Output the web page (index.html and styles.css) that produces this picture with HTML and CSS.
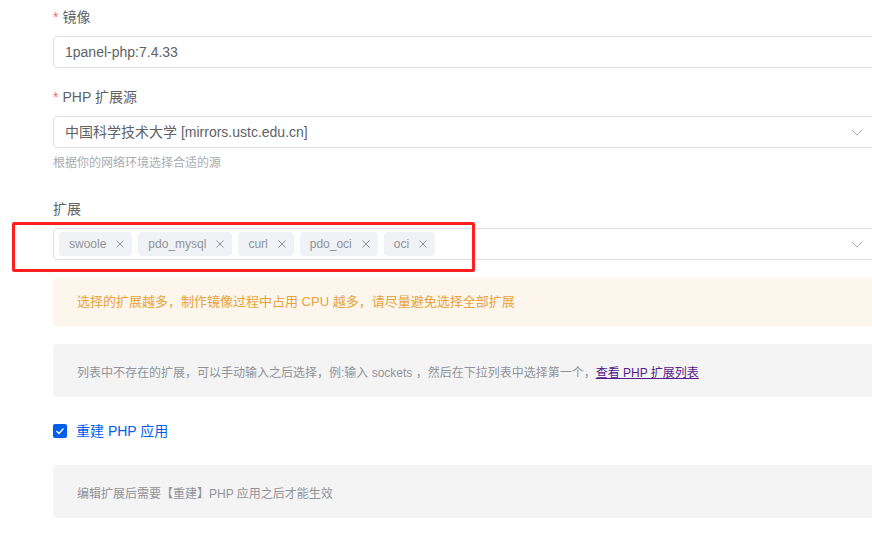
FILE: index.html
```html
<!DOCTYPE html>
<html lang="zh-CN">
<head>
<meta charset="utf-8">
<title>PHP 扩展</title>
<link rel="stylesheet" href="styles.css">
</head>
<body>
<div class="page">
  <div class="form-item">
    <div class="label"><span class="req">*</span>镜像</div>
    <div class="input">1panel-php:7.4.33</div>
  </div>

  <div class="form-item form-item--help">
    <div class="label"><span class="req">*</span>PHP 扩展源</div>
    <div class="input select">
      <span>中国科学技术大学 [mirrors.ustc.edu.cn]</span>
      <svg class="chevron" width="12" height="7" viewBox="0 0 12 7"><polyline points="1,1 6,6 11,1" fill="none" stroke="#a8abb2" stroke-width="1"/></svg>
    </div>
    <div class="help">根据你的网络环境选择合适的源</div>
  </div>

  <div class="form-item">
    <div class="label">扩展</div>
    <div class="select-wrap">
      <div class="input select tags-input">
        <div class="tags">
          <span class="tag">swoole<svg class="tag-close" width="8" height="8" viewBox="0 0 8 8"><path d="M0.5 0.5 L7.5 7.5 M7.5 0.5 L0.5 7.5" stroke="#909399" stroke-width="1"/></svg></span>
          <span class="tag">pdo_mysql<svg class="tag-close" width="8" height="8" viewBox="0 0 8 8"><path d="M0.5 0.5 L7.5 7.5 M7.5 0.5 L0.5 7.5" stroke="#909399" stroke-width="1"/></svg></span>
          <span class="tag">curl<svg class="tag-close" width="8" height="8" viewBox="0 0 8 8"><path d="M0.5 0.5 L7.5 7.5 M7.5 0.5 L0.5 7.5" stroke="#909399" stroke-width="1"/></svg></span>
          <span class="tag">pdo_oci<svg class="tag-close" width="8" height="8" viewBox="0 0 8 8"><path d="M0.5 0.5 L7.5 7.5 M7.5 0.5 L0.5 7.5" stroke="#909399" stroke-width="1"/></svg></span>
          <span class="tag">oci<svg class="tag-close" width="8" height="8" viewBox="0 0 8 8"><path d="M0.5 0.5 L7.5 7.5 M7.5 0.5 L0.5 7.5" stroke="#909399" stroke-width="1"/></svg></span>
        </div>
        <svg class="chevron" width="12" height="7" viewBox="0 0 12 7"><polyline points="1,1 6,6 11,1" fill="none" stroke="#a8abb2" stroke-width="1"/></svg>
      </div>
      <div class="highlight"></div>
    </div>
  </div>

  <div class="alert alert--warning">选择的扩展越多，制作镜像过程中占用 CPU 越多，请尽量避免选择全部扩展</div>

  <div class="alert alert--info">列表中不存在的扩展，可以手动输入之后选择，例:输入 sockets ，然后在下拉列表中选择第一个，<a class="link" href="#">查看 PHP 扩展列表</a></div>

  <div class="checkbox-row">
    <span class="checkbox"><svg width="10" height="8" viewBox="0 0 10 8"><polyline points="1.5,4 4,6.5 8.5,1.5" fill="none" stroke="#fff" stroke-width="1.3"/></svg></span>
    <span class="checkbox-label">重建 PHP 应用</span>
  </div>

  <div class="alert alert--info">编辑扩展后需要【重建】PHP 应用之后才能生效</div>
</div>
</body>
</html>
```

FILE: styles.css
```css
html, body {
  margin: 0;
  padding: 0;
  overflow: hidden;
  background: #ffffff;
}

body {
  font-family: "Liberation Sans", "Noto Sans CJK SC", sans-serif;
  color: #606266;
}

.page {
  width: 823px;
  padding: 6px 0 0 53px;
}

.form-item {
  margin-bottom: 18px;
}

.form-item--help {
  margin-bottom: 24px;
}

.label {
  font-size: 14px;
  line-height: 22px;
  height: 22px;
  color: #606266;
  margin-bottom: 8px;
}

.req {
  color: #f56c6c;
  margin-right: 4px;
}

.input {
  box-sizing: border-box;
  height: 32px;
  border: 1px solid #dcdfe6;
  border-radius: 4px;
  padding: 0 11px;
  display: flex;
  align-items: center;
  font-size: 14px;
  line-height: 20px;
  color: #606266;
}

.select {
  justify-content: space-between;
}

.chevron {
  margin-right: 1px;
  flex: none;
}

.help {
  margin-top: 4px;
  font-size: 12px;
  line-height: 22px;
  height: 22px;
  color: #a8abb2;
}

.select-wrap {
  position: relative;
}

.tags-input {
  padding-left: 5px;
}

.tags {
  display: flex;
  gap: 6px;
  align-items: center;
}

.tag {
  box-sizing: border-box;
  height: 24px;
  display: inline-flex;
  align-items: center;
  padding: 0 8px 0 10px;
  background: #f0f2f5;
  border-radius: 4px;
  font-size: 12px;
  color: #909399;
  white-space: nowrap;
}

.tag-close {
  margin-left: 10px;
  flex: none;
}

.highlight {
  position: absolute;
  left: -41px;
  top: -6px;
  width: 463px;
  height: 50px;
  box-sizing: border-box;
  border: 3px solid #ff1f1f;
  border-radius: 2px;
  pointer-events: none;
}

.alert {
  border-radius: 4px;
  margin-bottom: 18px;
  white-space: nowrap;
  overflow: hidden;
}

.alert--warning {
  background: #fdf6ec;
  color: #e6a23c;
  font-size: 13px;
  line-height: 18px;
  padding: 15px 24px;
}

.alert--info {
  background: #f4f4f5;
  color: #909399;
  font-size: 12px;
  line-height: 18px;
  padding: 20px 24px 15px;
}

.link {
  color: #551a8b;
  text-decoration: underline;
}

.checkbox-row {
  height: 32px;
  display: flex;
  align-items: center;
  margin-bottom: 18px;
}

.checkbox {
  box-sizing: border-box;
  width: 14px;
  height: 14px;
  border-radius: 2px;
  background: #005eeb;
  display: inline-flex;
  align-items: center;
  justify-content: center;
}

.checkbox-label {
  margin-left: 9px;
  font-size: 14px;
  line-height: 20px;
  color: #005eeb;
}
```
